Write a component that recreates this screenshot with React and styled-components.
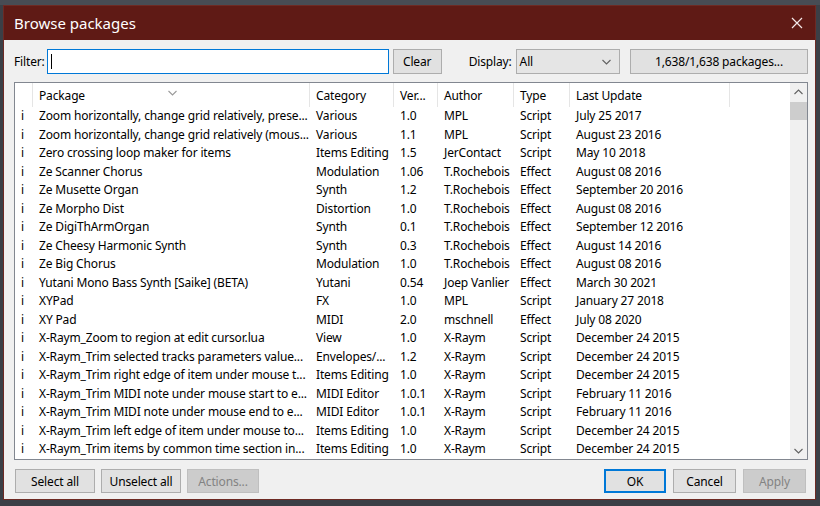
import styled, { createGlobalStyle } from 'styled-components';

const GlobalStyle = createGlobalStyle`
  html, body {
    margin: 0;
    padding: 0;
    background: #3b3f46;
  }
  body {
    font-family: 'Noto Sans', 'Liberation Sans', sans-serif;
    font-size: 12px;
    letter-spacing: -0.15px;
    color: #000;
  }
`;

const Desktop = styled.div`
  width: 820px;
  height: 506px;
  box-sizing: border-box;
  padding: 5px 4px 6px 3px;
  background: linear-gradient(#474c54 0 5px, #3b3f46 5px);
`;

const Window = styled.div`
  height: 100%;
  display: flex;
  flex-direction: column;
  border: 1px solid #6d2a24;
  box-sizing: border-box;
  background: #f0f0f0;
`;

const TitleBar = styled.div`
  height: 34px;
  flex: none;
  display: flex;
  align-items: center;
  justify-content: space-between;
  padding: 0 12px 0 10px;
  background: #5f1a15;
  color: #fff;
  font-size: 15px;
  letter-spacing: 0;
`;

const CloseIcon = () => (
  <svg width="12" height="12" viewBox="0 0 12 12">
    <path d="M1 1 L11 11 M11 1 L1 11" stroke="#f4e8e8" strokeWidth="1.2" fill="none" />
  </svg>
);

const Body = styled.div`
  flex: 1;
  display: flex;
  flex-direction: column;
  padding: 9px 7px 6px 10px;
  min-height: 0;
`;

const FilterRow = styled.div`
  display: flex;
  align-items: center;
  height: 25px;
`;

const Label = styled.span`
  margin-right: ${p => p.$gap || 3}px;
  margin-left: ${p => p.$left || 0}px;
`;

const Input = styled.div`
  width: 342px;
  height: 25px;
  box-sizing: border-box;
  border: 1px solid #0078d7;
  background: #fff;
  display: flex;
  align-items: center;
  padding-left: 3px;
`;

const Caret = styled.span`
  width: 1px;
  height: 15px;
  background: #000;
`;

const Button = styled.div`
  width: ${p => p.$w}px;
  height: ${p => p.$h || 25}px;
  box-sizing: border-box;
  display: flex;
  align-items: center;
  justify-content: center;
  margin-left: ${p => p.$ml || 0}px;
  background: ${p => (p.$disabled ? '#cccccc' : '#e1e1e1')};
  border: 1px solid ${p => (p.$disabled ? '#bfbfbf' : p.$default ? '#0078d7' : '#adadad')};
  box-shadow: ${p => (p.$default ? 'inset 0 0 0 1px #0078d7' : 'none')};
  color: ${p => (p.$disabled ? '#838383' : '#000')};
`;

const Select = styled.div`
  width: 104px;
  height: 25px;
  box-sizing: border-box;
  border: 1px solid #adadad;
  background: #e5e5e5;
  display: flex;
  align-items: center;
  justify-content: space-between;
  padding: 0 8px 0 3px;
`;

const Chevron = ({ up, color = '#606060' }) => (
  <svg width="9" height="6" viewBox="0 0 9 6">
    <path d={up ? 'M0.5 5 L4.5 1 L8.5 5' : 'M0.5 1 L4.5 5 L8.5 1'} stroke={color} strokeWidth="1.1" fill="none" />
  </svg>
);

const ListBox = styled.div`
  margin-top: 8px;
  flex: 1;
  display: flex;
  border: 1px solid #828790;
  background: #fff;
  min-height: 0;
`;

const Table = styled.div`
  flex: 1;
  display: flex;
  flex-direction: column;
`;

const cols = '18px 277px 84px 44px 76px 56px 160px 1fr';

const HeaderRow = styled.div`
  display: grid;
  grid-template-columns: ${cols};
  height: 24px;
  position: relative;
`;

const HeaderCell = styled.div`
  display: flex;
  align-items: center;
  padding-left: 6px;
  border-right: 1px solid ${p => (p.$last ? 'transparent' : '#e5e5e5')};
  overflow: hidden;
  white-space: nowrap;
`;

const SortMark = styled.div`
  position: absolute;
  left: 153px;
  top: 0;
`;

const Row = styled.div`
  display: grid;
  grid-template-columns: ${cols};
  height: 18.5px;
  line-height: 18.5px;
`;

const Cell = styled.div`
  padding-left: 6px;
  overflow: hidden;
  white-space: nowrap;
`;

const Scrollbar = styled.div`
  width: 17px;
  background: #f0f0f0;
  display: flex;
  flex-direction: column;
  align-items: center;
  margin-left: 1px;
`;

const Arrow = styled.div`
  height: 17px;
  display: flex;
  align-items: center;
  justify-content: center;
`;

const Thumb = styled.div`
  width: 17px;
  height: 18px;
  background: #cdcdcd;
  margin-top: 2px;
`;

const Track = styled.div`
  flex: 1;
`;

const Footer = styled.div`
  display: flex;
  align-items: center;
  margin-top: 9px;
  padding-left: 1px;
  padding-right: 2px;
`;

const Spacer = styled.div`
  flex: 1;
`;

const rows = [
  ['Zoom horizontally, change grid relatively, prese...', 'Various', '1.0', 'MPL', 'Script', 'July 25 2017'],
  ['Zoom horizontally, change grid relatively (mous...', 'Various', '1.1', 'MPL', 'Script', 'August 23 2016'],
  ['Zero crossing loop maker for items', 'Items Editing', '1.5', 'JerContact', 'Script', 'May 10 2018'],
  ['Ze Scanner Chorus', 'Modulation', '1.06', 'T.Rochebois', 'Effect', 'August 08 2016'],
  ['Ze Musette Organ', 'Synth', '1.2', 'T.Rochebois', 'Effect', 'September 20 2016'],
  ['Ze Morpho Dist', 'Distortion', '1.0', 'T.Rochebois', 'Effect', 'August 08 2016'],
  ['Ze DigiThArmOrgan', 'Synth', '0.1', 'T.Rochebois', 'Effect', 'September 12 2016'],
  ['Ze Cheesy Harmonic Synth', 'Synth', '0.3', 'T.Rochebois', 'Effect', 'August 14 2016'],
  ['Ze Big Chorus', 'Modulation', '1.0', 'T.Rochebois', 'Effect', 'August 08 2016'],
  ['Yutani Mono Bass Synth [Saike] (BETA)', 'Yutani', '0.54', 'Joep Vanlier', 'Effect', 'March 30 2021'],
  ['XYPad', 'FX', '1.0', 'MPL', 'Script', 'January 27 2018'],
  ['XY Pad', 'MIDI', '2.0', 'mschnell', 'Effect', 'July 08 2020'],
  ['X-Raym_Zoom to region at edit cursor.lua', 'View', '1.0', 'X-Raym', 'Script', 'December 24 2015'],
  ['X-Raym_Trim selected tracks parameters value...', 'Envelopes/...', '1.2', 'X-Raym', 'Script', 'December 24 2015'],
  ['X-Raym_Trim right edge of item under mouse t...', 'Items Editing', '1.0', 'X-Raym', 'Script', 'December 24 2015'],
  ['X-Raym_Trim MIDI note under mouse start to e...', 'MIDI Editor', '1.0.1', 'X-Raym', 'Script', 'February 11 2016'],
  ['X-Raym_Trim MIDI note under mouse end to e...', 'MIDI Editor', '1.0.1', 'X-Raym', 'Script', 'February 11 2016'],
  ['X-Raym_Trim left edge of item under mouse to...', 'Items Editing', '1.0', 'X-Raym', 'Script', 'December 24 2015'],
  ['X-Raym_Trim items by common time section in...', 'Items Editing', '1.0', 'X-Raym', 'Script', 'December 24 2015'],
];

const headers = ['', 'Package', 'Category', 'Ver...', 'Author', 'Type', 'Last Update', ''];

export default function App() {
  return (
    <>
      <GlobalStyle />
      <Desktop>
        <Window>
          <TitleBar>
            <span>Browse packages</span>
            <CloseIcon />
          </TitleBar>
          <Body>
            <FilterRow>
              <Label $gap={2}>Filter:</Label>
              <Input>
                <Caret />
              </Input>
              <Button $w={49} $ml={4}>Clear</Button>
              <Label $left={27} $gap={4}>Display:</Label>
              <Select>
                <span>All</span>
                <Chevron />
              </Select>
              <Spacer />
              <Button $w={178}>1,638/1,638 packages...</Button>
            </FilterRow>
            <ListBox>
              <Table>
                <HeaderRow>
                  {headers.map((h, i) => (
                    <HeaderCell key={i} $last={i === headers.length - 1}>{h}</HeaderCell>
                  ))}
                  <SortMark>
                    <Chevron color="#9a9a9a" />
                  </SortMark>
                </HeaderRow>
                {rows.map((r, i) => (
                  <Row key={i}>
                    <Cell>i</Cell>
                    {r.map((c, j) => (
                      <Cell key={j}>{c}</Cell>
                    ))}
                  </Row>
                ))}
              </Table>
              <Scrollbar>
                <Arrow>
                  <Chevron up />
                </Arrow>
                <Thumb />
                <Track />
                <Arrow>
                  <Chevron />
                </Arrow>
              </Scrollbar>
            </ListBox>
            <Footer>
              <Button $w={80} $h={24}>Select all</Button>
              <Button $w={80} $h={24} $ml={6}>Unselect all</Button>
              <Button $w={72} $h={24} $ml={6} $disabled>Actions...</Button>
              <Spacer />
              <Button $w={62} $h={24} $default>OK</Button>
              <Button $w={63} $h={24} $ml={7}>Cancel</Button>
              <Button $w={63} $h={24} $ml={7} $disabled>Apply</Button>
            </Footer>
          </Body>
        </Window>
      </Desktop>
    </>
  );
}
